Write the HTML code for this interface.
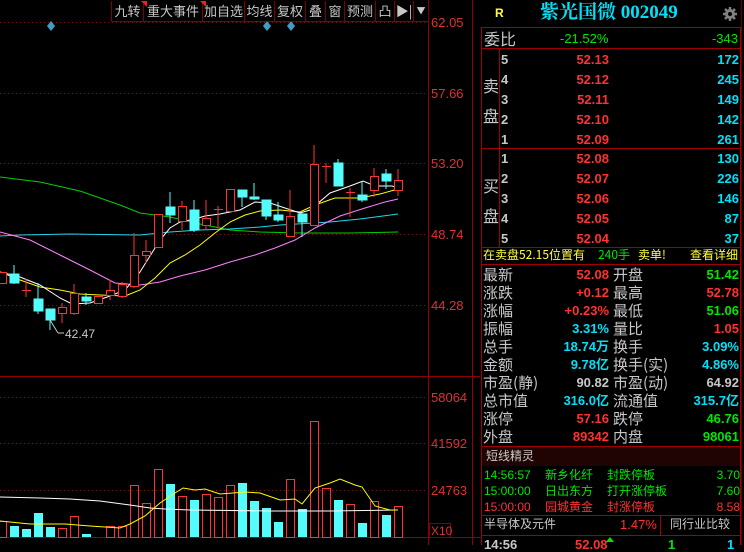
<!DOCTYPE html>
<html><head><meta charset="utf-8">
<style>
*{margin:0;padding:0;box-sizing:border-box}
body{width:744px;height:545px;background:#000;overflow:hidden;position:relative;font-family:"Liberation Sans","Noto Sans CJK SC",sans-serif;}
.a{position:absolute;white-space:nowrap;line-height:1}
.r{color:#ff3232}.g{color:#00e600}.c{color:#00e0f8}.w{color:#c8c8c8}.y{color:#ffff40}
.tb{position:absolute;top:1px;height:21px;border:1px solid #800000;border-top:none;color:#c8c8c8;font-size:13px;line-height:20px;text-align:center;font-family:"Noto Sans CJK SC",sans-serif}
.lab{font-size:15px;font-family:"Noto Sans CJK SC",sans-serif;color:#c8c8c8;white-space:nowrap;font-weight:normal}
.row{display:flex;height:18px;line-height:18px;white-space:nowrap;overflow:visible}
</style></head><body>
<svg width="744" height="545" style="position:absolute;left:0;top:0">
<g stroke="#a00000" stroke-dasharray="1,3" stroke-width="1">
<line x1="0" y1="22.5" x2="428" y2="22.5"/><line x1="0" y1="93.5" x2="428" y2="93.5"/><line x1="0" y1="163.5" x2="428" y2="163.5"/><line x1="0" y1="234.5" x2="428" y2="234.5"/><line x1="0" y1="305.5" x2="428" y2="305.5"/>
<line x1="0" y1="397.5" x2="428" y2="397.5"/><line x1="0" y1="443.5" x2="428" y2="443.5"/><line x1="0" y1="490.5" x2="428" y2="490.5"/>
</g>
<line x1="428.5" y1="0" x2="428.5" y2="545" stroke="#900000"/>
<line x1="0" y1="376.5" x2="480" y2="376.5" stroke="#900000"/>
<line x1="0" y1="537.5" x2="480" y2="537.5" stroke="#900000"/>
<line x1="472.5" y1="0" x2="472.5" y2="545" stroke="#900000"/>
<rect x="429.5" y="523.5" width="21" height="14" fill="none" stroke="#800000"/>
<g fill="#3ba0c8"><path d="M51 21l4 5-4 5-4-5z"/><path d="M267 21l4 5-4 5-4-5z"/><path d="M291 21l4 5-4 5-4-5z"/></g>
<polyline fill="none" stroke="#00d000" points="0,177 40,182 80,191 120,205 140,213 170,217 200,224 230,230 260,232 300,233 350,233 398,232"/>
<polyline fill="none" stroke="#20d8f0" points="0,236 20,235 70,234 140,235 170,232 200,230 230,229 260,227 280,225 330,222 360,219 398,214"/>
<polyline fill="none" stroke="#ff80ff" points="0,232 30,240 60,255 90,270 115,283 140,285 160,282 180,276 205,270 230,262 255,255 275,248 295,240 315,228 340,216 365,208 385,202 398,199"/>
<polyline fill="none" stroke="#ffff00" points="0,272 20,280 40,287 60,290 80,294 100,295 125,296 140,290 155,278 170,263 185,255 200,245 215,233 230,222 245,215 260,211 280,210 300,212 315,205 335,198 360,198 380,194 398,189"/>
<polyline fill="none" stroke="#ffffff" points="0,272 20,277 40,285 60,298 72,304 90,303 110,296 125,290 140,272 150,256 160,240 170,228 180,222 195,219 205,216 220,214 240,210 255,202 270,203 285,208 300,213 310,210 330,193 350,186 363,181 375,186 392,186 398,188"/>
<g stroke="#ff3232" fill="#000">
<rect x="-1.5" y="272.5" width="8" height="11"/>
<line x1="26" y1="279" x2="26" y2="297"/><line x1="22" y1="290.5" x2="31" y2="290.5"/>
<line x1="62" y1="303" x2="62" y2="323"/><rect x="58.5" y="307.5" width="8" height="6"/>
<line x1="74" y1="284" x2="74" y2="315"/><rect x="70.5" y="293.5" width="8" height="20"/>
<rect x="94.5" y="296.5" width="8" height="7"/>
<line x1="110" y1="280" x2="110" y2="300"/><rect x="106.5" y="290.5" width="8" height="5"/>
<line x1="122" y1="282" x2="122" y2="298"/><rect x="118.5" y="284.5" width="8" height="12"/>
<line x1="134" y1="233" x2="134" y2="288"/><rect x="130.5" y="255.5" width="8" height="31"/>
<line x1="146" y1="240" x2="146" y2="263"/><rect x="142.5" y="251.5" width="8" height="4"/>
<line x1="158" y1="214" x2="158" y2="248"/><rect x="154.5" y="214.5" width="8" height="33"/>
<line x1="182" y1="201" x2="182" y2="230"/><rect x="178.5" y="206.5" width="8" height="15"/>
<line x1="206" y1="200" x2="206" y2="230"/><rect x="202.5" y="218.5" width="8" height="7"/>
<line x1="218" y1="206" x2="218" y2="227"/><line x1="214" y1="209.5" x2="223" y2="209.5"/>
<line x1="230" y1="189" x2="230" y2="213"/><rect x="226.5" y="189.5" width="8" height="22"/>
<line x1="290" y1="190" x2="290" y2="237"/><rect x="286.5" y="216.5" width="8" height="20"/>
<line x1="314" y1="145" x2="314" y2="226"/><rect x="310.5" y="164.5" width="8" height="61"/>
<line x1="326" y1="163" x2="326" y2="183"/><line x1="322" y1="166.5" x2="331" y2="166.5"/>
<line x1="350" y1="188" x2="350" y2="217"/><line x1="346" y1="192.5" x2="355" y2="192.5"/>
<line x1="374" y1="168" x2="374" y2="197"/><rect x="370.5" y="176.5" width="8" height="14"/>
<line x1="398" y1="169" x2="398" y2="196"/><rect x="394.5" y="180.5" width="8" height="10"/>
</g>
<g stroke="#54fcfc" fill="#54fcfc">
<line x1="14" y1="265" x2="14" y2="284"/><rect x="10" y="274" width="9" height="9"/>
<line x1="38" y1="283" x2="38" y2="314"/><rect x="34" y="299" width="9" height="12"/>
<line x1="50" y1="309" x2="50" y2="330"/><rect x="46" y="309" width="9" height="11"/>
<line x1="86" y1="293" x2="86" y2="305"/><rect x="82" y="297" width="9" height="4"/>
<line x1="170" y1="192" x2="170" y2="223"/><rect x="166" y="207" width="9" height="8"/>
<line x1="194" y1="200" x2="194" y2="232"/><rect x="190" y="210" width="9" height="20"/>
<line x1="242" y1="190" x2="242" y2="207"/><rect x="238" y="190" width="9" height="7"/>
<line x1="254" y1="183" x2="254" y2="200"/><rect x="250" y="197" width="9" height="2"/>
<line x1="266" y1="200" x2="266" y2="220"/><rect x="262" y="200" width="9" height="16"/>
<line x1="278" y1="202" x2="278" y2="222"/><rect x="274" y="215" width="9" height="5"/>
<line x1="302" y1="213" x2="302" y2="237"/><rect x="298" y="214" width="9" height="8"/>
<line x1="338" y1="159" x2="338" y2="186"/><rect x="334" y="163" width="9" height="23"/>
<line x1="362" y1="182" x2="362" y2="202"/><rect x="358" y="195" width="9" height="5"/>
<line x1="386" y1="169" x2="386" y2="189"/><rect x="382" y="174" width="9" height="7"/>
</g>
<line x1="50" y1="320" x2="58" y2="333" stroke="#c8c8c8"/><line x1="58" y1="333" x2="64" y2="333" stroke="#c8c8c8"/>
<text x="65" y="338" fill="#c8c8c8" font-size="12" font-family="Liberation Sans">42.47</text>
<g fill="#54fcfc">
<rect x="10" y="526" width="9" height="11"/><rect x="22" y="529" width="9" height="8"/><rect x="34" y="513" width="9" height="24"/><rect x="46" y="527" width="9" height="10"/><rect x="82" y="534" width="9" height="3"/>
<rect x="166" y="484" width="9" height="53"/><rect x="190" y="500" width="9" height="37"/><rect x="238" y="483" width="9" height="54"/><rect x="250" y="501" width="9" height="36"/><rect x="262" y="508" width="9" height="29"/><rect x="274" y="522" width="9" height="15"/><rect x="298" y="509" width="9" height="28"/><rect x="334" y="500" width="9" height="37"/><rect x="358" y="523" width="9" height="14"/><rect x="382" y="515" width="9" height="22"/>
</g>
<g stroke="#ff3232" fill="none">
<rect x="-1.5" y="521.5" width="8" height="16"/><rect x="58.5" y="528.5" width="8" height="9"/><rect x="70.5" y="516.5" width="8" height="21"/><rect x="106.5" y="526.5" width="8" height="11"/><rect x="118.5" y="526.5" width="8" height="11"/><rect x="130.5" y="485.5" width="8" height="52"/><rect x="142.5" y="503.5" width="8" height="34"/><rect x="154.5" y="469.5" width="8" height="68"/><rect x="178.5" y="496.5" width="8" height="41"/><rect x="202.5" y="494.5" width="8" height="43"/><rect x="214.5" y="497.5" width="8" height="40"/><rect x="226.5" y="485.5" width="8" height="52"/><rect x="286.5" y="479.5" width="8" height="58"/><rect x="310.5" y="421.5" width="8" height="116"/><rect x="322.5" y="488.5" width="8" height="49"/><rect x="346.5" y="504.5" width="8" height="33"/><rect x="370.5" y="501.5" width="8" height="36"/><rect x="394.5" y="506.5" width="8" height="31"/>
</g>
<polyline fill="none" stroke="#ffffff" points="0,497 40,498 70,499 100,501 130,505 150,508 165,509 190,510 270,511 330,511 398,510"/>
<polyline fill="none" stroke="#ffff00" points="0,521 30,524 50,524 65,524 90,526 120,528 130,524 145,516 160,503 175,493 183,488 195,490 205,489 220,494 245,492 260,493 280,500 295,499 302,504 315,488 330,483 340,479 355,485 362,487 375,506 390,510 398,510"/>
<g font-family="Liberation Sans" font-size="13" fill="#e03030">
<text x="431" y="27">62.05</text><text x="431" y="98">57.66</text><text x="431" y="168">53.20</text><text x="431" y="239">48.74</text><text x="431" y="310">44.28</text>
<text x="431" y="402">58064</text><text x="431" y="448">41592</text><text x="431" y="495">24763</text><text x="431" y="535" font-size="12">X10</text>
</g>
<g stroke="#a00000" fill="none">
<rect x="481.5" y="27.5" width="259" height="525"/>
<line x1="481" y1="48.5" x2="741" y2="48.5"/><line x1="481" y1="148.5" x2="741" y2="148.5"/><line x1="481" y1="247.5" x2="741" y2="247.5"/>
<line x1="499.5" y1="48" x2="499.5" y2="247"/>
<line x1="481" y1="264.5" x2="741" y2="264.5"/><line x1="481" y1="446.5" x2="741" y2="446.5"/><line x1="481" y1="515.5" x2="741" y2="515.5"/><line x1="481" y1="535.5" x2="741" y2="535.5"/><line x1="660.5" y1="515" x2="660.5" y2="535"/>
</g>
<rect x="482" y="447" width="258" height="19" fill="#200404"/>
<line x1="741.5" y1="0" x2="741.5" y2="545" stroke="#600000"/>
<g fill="#808080" transform="translate(730,14)"><circle r="5"/><g stroke="#808080" stroke-width="2.5"><line x1="0" y1="-7" x2="0" y2="7"/><line x1="-7" y1="0" x2="7" y2="0"/><line x1="-5" y1="-5" x2="5" y2="5"/><line x1="-5" y1="5" x2="5" y2="-5"/></g><circle r="2" fill="#000"/></g>
<polygon points="606,542 614,542 610,537" fill="#00e600"/>
</svg>
<div class="tb" style="left:111px;width:33px">九转</div>
<div class="tb" style="left:143px;width:60px">重大事件</div>
<div class="tb" style="left:202px;width:43px">加自选</div>
<div class="tb" style="left:244px;width:31px">均线</div>
<div class="tb" style="left:274px;width:32px">复权</div>
<div class="tb" style="left:305px;width:21px">叠</div>
<div class="tb" style="left:325px;width:20px">窗</div>
<div class="tb" style="left:344px;width:32px">预测</div>
<div class="tb" style="left:375px;width:20px">凸</div>
<div class="tb" style="left:394px;width:20px">▶|</div>
<div class="tb" style="left:413px;width:16px;font-size:9px">▼</div>
<div class="a" style="left:141px;top:1px;width:0;height:0;border-left:6px solid transparent;border-top:6px solid #f02020"></div>
<div class="a" style="left:200px;top:1px;width:0;height:0;border-left:6px solid transparent;border-top:6px solid #f02020"></div>

<div class="a y" style="left:495px;top:7px;font-size:12px;font-weight:bold">R</div>
<div class="a c" style="left:540px;top:3px;font-size:19px;font-weight:bold;font-family:'Liberation Serif','Noto Serif CJK SC',serif">紫光国微 002049</div>
<div class="a lab" style="left:484px;top:30px;font-size:16px">委比</div>
<div class="a g" style="left:560px;top:32px;font-size:13px">-21.52%</div>
<div class="a g" style="right:6px;top:32px;font-size:13px">-343</div>
<div class="a lab" style="left:483px;top:70px;font-size:16px;line-height:30px;width:16px;white-space:normal">卖<br>盘</div>
<div class="a lab" style="left:483px;top:170px;font-size:16px;line-height:30px;width:16px;white-space:normal">买<br>盘</div>
<div style="position:absolute;left:501px;top:50px;width:238px;font-size:13px;font-weight:bold;line-height:20px">
<div style="display:flex"><span class="w" style="width:30px">5</span><span class="r" style="width:78px;text-align:right">52.13</span><span class="c" style="flex:1;text-align:right">172</span></div>
<div style="display:flex"><span class="w" style="width:30px">4</span><span class="r" style="width:78px;text-align:right">52.12</span><span class="c" style="flex:1;text-align:right">245</span></div>
<div style="display:flex"><span class="w" style="width:30px">3</span><span class="r" style="width:78px;text-align:right">52.11</span><span class="c" style="flex:1;text-align:right">149</span></div>
<div style="display:flex"><span class="w" style="width:30px">2</span><span class="r" style="width:78px;text-align:right">52.10</span><span class="c" style="flex:1;text-align:right">142</span></div>
<div style="display:flex"><span class="w" style="width:30px">1</span><span class="r" style="width:78px;text-align:right">52.09</span><span class="c" style="flex:1;text-align:right">261</span></div>
</div>
<div style="position:absolute;left:501px;top:149px;width:238px;font-size:13px;font-weight:bold;line-height:20px">
<div style="display:flex"><span class="w" style="width:30px">1</span><span class="r" style="width:78px;text-align:right">52.08</span><span class="c" style="flex:1;text-align:right">130</span></div>
<div style="display:flex"><span class="w" style="width:30px">2</span><span class="r" style="width:78px;text-align:right">52.07</span><span class="c" style="flex:1;text-align:right">226</span></div>
<div style="display:flex"><span class="w" style="width:30px">3</span><span class="r" style="width:78px;text-align:right">52.06</span><span class="c" style="flex:1;text-align:right">146</span></div>
<div style="display:flex"><span class="w" style="width:30px">4</span><span class="r" style="width:78px;text-align:right">52.05</span><span class="c" style="flex:1;text-align:right">87</span></div>
<div style="display:flex"><span class="w" style="width:30px">5</span><span class="r" style="width:78px;text-align:right">52.04</span><span class="c" style="flex:1;text-align:right">37</span></div>
</div>
<div class="a y" style="left:483px;top:249px;font-size:12px;font-family:'Noto Sans CJK SC',sans-serif">在卖盘52.15位置有</div>
<div class="a g" style="left:598px;top:249px;font-size:12px;font-family:'Noto Sans CJK SC',sans-serif">240手</div>
<div class="a y" style="left:638px;top:249px;font-size:12px;font-family:'Noto Sans CJK SC',sans-serif">卖单!</div>
<div class="a y" style="left:690px;top:249px;font-size:12px;font-family:'Noto Sans CJK SC',sans-serif">查看详细</div>

<div style="position:absolute;left:483px;top:266px;width:256px;font-size:13px;font-weight:bold">
<div class="row"><span class="lab" style="width:50px">最新</span><span class="r" style="width:76px;text-align:right">52.08</span><span class="lab" style="width:50px;margin-left:4px">开盘</span><span class="g" style="flex:1;text-align:right">51.42</span></div>
<div class="row"><span class="lab" style="width:50px">涨跌</span><span class="r" style="width:76px;text-align:right">+0.12</span><span class="lab" style="width:50px;margin-left:4px">最高</span><span class="r" style="flex:1;text-align:right">52.78</span></div>
<div class="row"><span class="lab" style="width:50px">涨幅</span><span class="r" style="width:76px;text-align:right">+0.23%</span><span class="lab" style="width:50px;margin-left:4px">最低</span><span class="g" style="flex:1;text-align:right">51.06</span></div>
<div class="row"><span class="lab" style="width:50px">振幅</span><span class="c" style="width:76px;text-align:right">3.31%</span><span class="lab" style="width:50px;margin-left:4px">量比</span><span class="r" style="flex:1;text-align:right">1.05</span></div>
<div class="row"><span class="lab" style="width:50px">总手</span><span class="c" style="width:76px;text-align:right">18.74万</span><span class="lab" style="width:50px;margin-left:4px">换手</span><span class="c" style="flex:1;text-align:right">3.09%</span></div>
<div class="row"><span class="lab" style="width:50px">金额</span><span class="c" style="width:76px;text-align:right">9.78亿</span><span class="lab" style="width:60px;margin-left:4px">换手(实)</span><span class="c" style="flex:1;text-align:right">4.86%</span></div>
<div class="row"><span class="lab" style="width:60px">市盈(静)</span><span class="w" style="width:66px;text-align:right">90.82</span><span class="lab" style="width:60px;margin-left:4px">市盈(动)</span><span class="w" style="flex:1;text-align:right">64.92</span></div>
<div class="row"><span class="lab" style="width:50px">总市值</span><span class="c" style="width:76px;text-align:right">316.0亿</span><span class="lab" style="width:50px;margin-left:4px">流通值</span><span class="c" style="flex:1;text-align:right">315.7亿</span></div>
<div class="row"><span class="lab" style="width:50px">涨停</span><span class="r" style="width:76px;text-align:right">57.16</span><span class="lab" style="width:50px;margin-left:4px">跌停</span><span class="g" style="flex:1;text-align:right">46.76</span></div>
<div class="row"><span class="lab" style="width:50px">外盘</span><span class="r" style="width:76px;text-align:right">89342</span><span class="lab" style="width:50px;margin-left:4px">内盘</span><span class="g" style="flex:1;text-align:right">98061</span></div>
</div>
<div class="a w" style="left:486px;top:450px;font-size:12px;font-family:'Noto Sans CJK SC',sans-serif">短线精灵</div>
<div style="position:absolute;left:484px;top:467px;width:256px;font-size:12px;line-height:16px;font-family:'Liberation Sans','Noto Sans CJK SC',sans-serif">
<div class="g" style="display:flex"><span style="width:61px">14:56:57</span><span style="width:62px">新乡化纤</span><span style="flex:1">封跌停板</span><span>3.70</span></div>
<div class="g" style="display:flex"><span style="width:61px">15:00:00</span><span style="width:62px">日出东方</span><span style="flex:1">打开涨停板</span><span>7.60</span></div>
<div class="r" style="display:flex"><span style="width:61px">15:00:00</span><span style="width:62px">园城黄金</span><span style="flex:1">封涨停板</span><span>8.58</span></div>
</div>
<div class="a w" style="left:484px;top:518px;font-size:12px;font-family:'Noto Sans CJK SC',sans-serif">半导体及元件</div>
<div class="a r" style="left:620px;top:518px;font-size:13px">1.47%</div>
<div class="a w" style="left:670px;top:518px;font-size:12px;font-family:'Noto Sans CJK SC',sans-serif">同行业比较</div>
<div class="a w" style="left:484px;top:538px;font-size:13px;font-weight:bold">14:56</div>
<div class="a r" style="left:575px;top:538px;font-size:13px;font-weight:bold">52.08</div>
<div class="a g" style="left:668px;top:538px;font-size:13px;font-weight:bold">1</div>
<div class="a c" style="left:727px;top:538px;font-size:13px;font-weight:bold">1</div>
</body></html>
